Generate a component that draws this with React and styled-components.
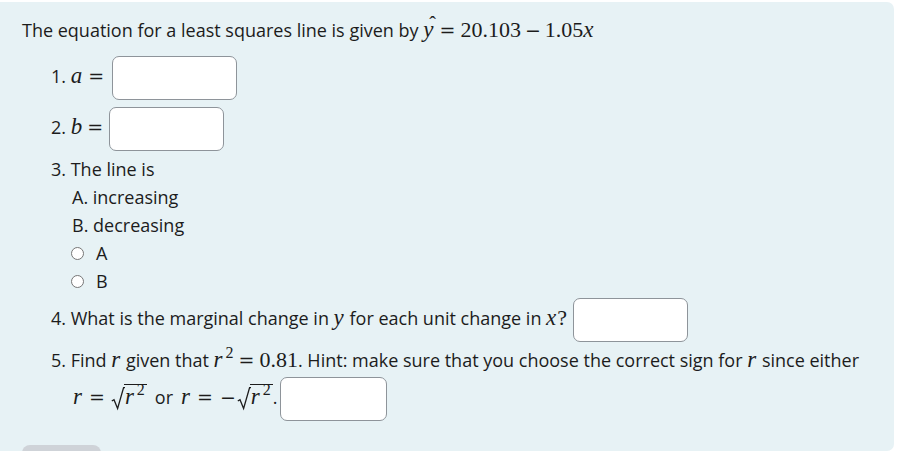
import React from "react";
import styled, { createGlobalStyle } from "styled-components";

const Global = createGlobalStyle`
  html, body { margin: 0; padding: 0; background: #ffffff; overflow: hidden; }
  body { font-family: "Open Sans", "Noto Sans", sans-serif; color: #1c1c1c; }
`;

const Panel = styled.div`
  margin: 2px 6px 0 -8px;
  padding: 16px 0 0 30px;
  height: 449px;
  overflow: hidden;
  box-sizing: border-box;
  background: #e7f2f5;
  border-radius: 7px;
  font-size: 18px;
`;

const Line = styled.div`
  height: ${(p) => p.h || 24}px;
  line-height: ${(p) => p.h || 24}px;
  margin-top: ${(p) => p.mt || 0}px;
  padding-left: ${(p) => p.indent || 0}px;
  white-space: nowrap;
`;

const ChoiceLine = styled.div`
  display: flex;
  align-items: center;
  height: 28px;
  padding-left: 49px;
`;

const M = styled.span`
  font-family: "Liberation Serif", "DejaVu Serif", serif;
  font-style: italic;
  font-size: 23px;
  margin-right: 1px;
`;

const Num = styled.span`
  font-family: "Liberation Serif", "DejaVu Serif", serif;
  font-size: 22px;
`;

const Op = styled.span`
  font-family: "DejaVu Serif", "Liberation Serif", serif;
  font-size: 19px;
  margin: 0 ${(p) => p.mx ?? 5}px;
`;

const Word = styled.span`
  margin: 0 ${(p) => p.mx || 0}px;
`;

const Sup = styled.span`
  font-family: "Liberation Serif", serif;
  font-size: 16px;
  vertical-align: 9px;
  line-height: 0;
  margin-left: 2px;
`;

const Sqrt = styled.span`
  display: inline-block;
  position: relative;
  padding-left: 13px;
  line-height: 1;
`;

const RadicalSign = styled.svg`
  position: absolute;
  left: 0;
  bottom: -4px;
  width: 14px;
  height: 24px;
`;

const Radicand = styled.span`
  display: inline-block;
  border-top: 1.2px solid #1c1c1c;
  padding: 2px 2px 0 1px;
  line-height: 20px;
`;

const Hat = styled.span`
  position: relative;
  display: inline-block;
  &::before {
    content: "ˆ";
    position: absolute;
    left: 6px;
    top: -6px;
    font-style: normal;
    font-size: 20px;
  }
`;

const Input = styled.span`
  display: inline-block;
  vertical-align: middle;
  width: ${(p) => p.w}px;
  height: 44px;
  box-sizing: border-box;
  background: #ffffff;
  border: 1px solid #8e949a;
  border-radius: 7px;
  margin-left: ${(p) => p.ml ?? 3}px;
`;

const Radio = styled.span`
  width: 13px;
  height: 13px;
  box-sizing: border-box;
  border: 1.5px solid #767676;
  border-radius: 50%;
  background: #ffffff;
  margin-right: 12px;
`;

const Button = styled.div`
  width: 79px;
  height: 30px;
  margin: 26px 0 0 0;
  background: #cfd3d8;
  border-radius: 8px;
`;

const Root = ({ children }) => (
  <Sqrt>
    <RadicalSign viewBox="0 0 14 24">
      <path d="M0.8 14 L3 12.7 L6.6 21.5 L12.6 0.6 L14 0.6" fill="none" stroke="#1c1c1c" strokeWidth="1.3" />
    </RadicalSign>
    <Radicand>{children}</Radicand>
  </Sqrt>
);

export default function App() {
  return (
    <>
      <Global />
      <Panel>
        <Line>
          The equation for a least squares line is given by{" "}
          <M><Hat>y</Hat></M>
          <Op>=</Op>
          <Num>20.103</Num>
          <Op mx={4}>−</Op>
          <Num>1.05</Num>
          <M>x</M>
        </Line>

        <Line h={44} mt={12} indent={29}>
          1. <M>a</M><Op>=</Op>
          <Input w={125} />
        </Line>

        <Line h={44} mt={7} indent={29}>
          2. <M>b</M><Op mx={4}>=</Op>
          <Input w={115} ml={2} />
        </Line>

        <Line h={28} mt={6} indent={29}>3. The line is</Line>
        <Line h={28} indent={50}>A. increasing</Line>
        <Line h={28} indent={50}>B. decreasing</Line>
        <ChoiceLine><Radio />A</ChoiceLine>
        <ChoiceLine><Radio />B</ChoiceLine>

        <Line h={44} mt={1} indent={29}>
          4. What is the marginal change in <M>y</M> for each unit change in{" "}
          <M>x</M><Num>?</Num>
          <Input w={115} ml={6} />
        </Line>

        <Line mt={8} indent={29}>
          5. Find <M>r</M> given that <M>r</M><Sup>2</Sup>
          <Op>=</Op><Num>0.81</Num>. Hint: make sure that you choose the correct sign for{" "}
          <M>r</M> since either
        </Line>

        <Line h={45} mt={2} indent={51}>
          <M>r</M><Op mx={6}>=</Op>
          <Root><M>r</M><Sup>2</Sup></Root>
          <Word mx={8}>or</Word><M>r</M><Op mx={6}>=</Op><Op mx={1}>−</Op>
          <Root><M>r</M><Sup>2</Sup></Root>.
          <Input w={107} ml={2} />
        </Line>

        <Button />
      </Panel>
    </>
  );
}
